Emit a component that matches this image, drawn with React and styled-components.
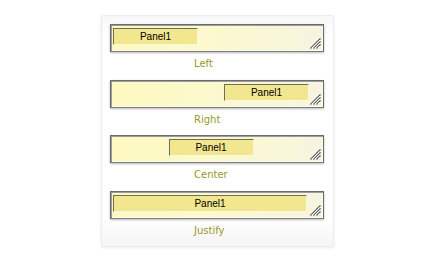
import React from "react"
import styled, { createGlobalStyle } from "styled-components"

const GlobalStyle = createGlobalStyle`
  html, body {
    margin: 0;
    padding: 0;
    background: #ffffff;
  }
`

const Page = styled.div`
  width: 440px;
  height: 268px;
  padding: 15px 0 0 101px;
  box-sizing: border-box;
`

const Card = styled.div`
  width: 233px;
  height: 232px;
  box-sizing: border-box;
  padding: 8px 9px 0 8px;
  border: 1px solid #ececec;
  border-radius: 2px;
  background: linear-gradient(#f6f6f6, #ffffff 8%, #ffffff 88%, #f5f5f5);
  box-shadow: 0 1px 3px rgba(0, 0, 0, 0.08);
`

const Item = styled.div`
  display: flex;
  flex-direction: column;
`

const Bar = styled.div`
  display: flex;
  align-items: flex-start;
  height: 28px;
  box-sizing: border-box;
  padding: 3px 2px 3px 2px;
  border: 1px solid #6c6c6c;
  border-bottom-color: #7e7e7e;
  background: linear-gradient(90deg, #fdf9bf 0%, #fcf9cd 45%, #f6f4e0 100%);
  box-shadow: inset 1px 1px 0 #9c9c9c, inset -1px -1px 0 #fdfbee,
    0 1px 2px rgba(0, 0, 0, 0.28);
`

const PanelArea = styled.div`
  flex: 1;
  display: flex;
  justify-content: ${(p) => p.$justify};
  padding-right: ${(p) => (p.$fill ? "2px" : "0")};
`

const Panel = styled.div`
  width: ${(p) => (p.$fill ? "auto" : "85px")};
  flex: ${(p) => (p.$fill ? "1" : "none")};
  height: 17px;
  box-sizing: border-box;
  border-top: 1px solid #6e6e5e;
  border-left: 1px solid #6e6e5e;
  border-right: 1px solid #fbf8e0;
  border-bottom: 1px solid #fbf8e0;
  background: #f2e68e;
  font-family: "Liberation Sans", Arial, sans-serif;
  font-size: 10px;
  line-height: 15px;
  color: #000000;
  text-align: center;
`

const Grip = styled.svg`
  flex: none;
  align-self: flex-end;
  width: 12px;
  height: 12px;
  margin-bottom: -1px;
`

const Label = styled.div`
  height: 27.5px;
  box-sizing: border-box;
  padding: 5px 0 0 84px;
  font-family: "DejaVu Sans", Verdana, sans-serif;
  font-size: 10px;
  line-height: 14px;
  color: #98982a;
`

const rows = [
  { label: "Left", justify: "flex-start" },
  { label: "Right", justify: "flex-end" },
  { label: "Center", justify: "center" },
  { label: "Justify", justify: "stretch", fill: true },
]

const SizeGrip = () => (
  <Grip viewBox="0 0 12 12">
    <g strokeWidth="1.2">
      <line x1="11.5" y1="1.5" x2="1.5" y2="11.5" stroke="#4a4a4a" />
      <line x1="11.5" y1="2.8" x2="2.8" y2="11.5" stroke="#ffffff" />
      <line x1="11.5" y1="4.5" x2="4.5" y2="11.5" stroke="#4a4a4a" />
      <line x1="11.5" y1="5.8" x2="5.8" y2="11.5" stroke="#ffffff" />
      <line x1="11.5" y1="7.5" x2="7.5" y2="11.5" stroke="#4a4a4a" />
      <line x1="11.5" y1="8.8" x2="8.8" y2="11.5" stroke="#ffffff" />
    </g>
  </Grip>
)

export default function App() {
  return (
    <>
      <GlobalStyle />
      <Page>
        <Card>
          {rows.map((r) => (
            <Item key={r.label}>
              <Bar>
                <PanelArea $justify={r.justify} $fill={r.fill}>
                  <Panel $fill={r.fill}>Panel1</Panel>
                </PanelArea>
                <SizeGrip />
              </Bar>
              <Label>{r.label}</Label>
            </Item>
          ))}
        </Card>
      </Page>
    </>
  )
}
